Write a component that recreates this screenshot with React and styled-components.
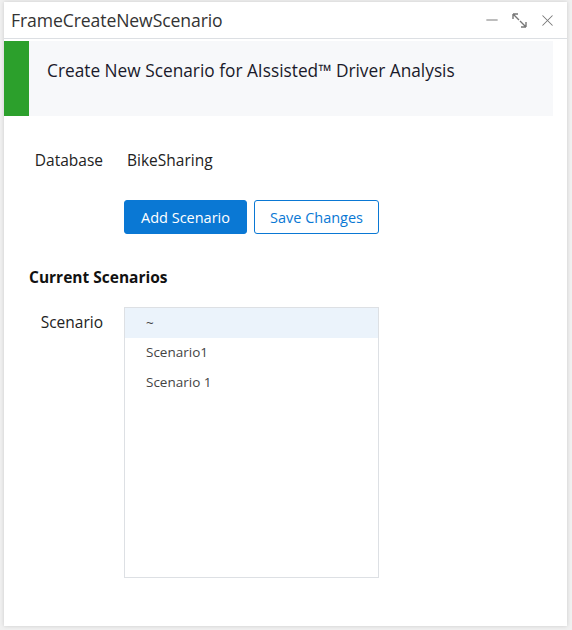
import React from "react";
import styled, { createGlobalStyle } from "styled-components";
import { Minus, X } from "lucide-react";

const Global = createGlobalStyle`
  html, body { margin: 0; padding: 0; background: #f0f0f0; }
  body { font-family: "Open Sans", "Noto Sans", sans-serif; color: #222; }
`;

const Page = styled.div`
  width: 572px;
  height: 630px;
  padding: 2px 5px 4px 4px;
  box-sizing: border-box;
`;

const Window = styled.div`
  height: 100%;
  background: #fff;
  box-shadow: 0 0 4px rgba(0, 0, 0, 0.15);
  display: flex;
  flex-direction: column;
`;

const TitleBar = styled.div`
  height: 36px;
  display: flex;
  align-items: center;
  justify-content: space-between;
  padding: 0 10px 0 7px;
  border-bottom: 1px solid #dcdfe3;
`;

const Title = styled.div`
  font-size: 17.6px;
  color: #333;
  letter-spacing: -0.1px;
`;

const Controls = styled.div`
  display: flex;
  align-items: center;
  gap: 10px;
  color: #777;
`;

const Banner = styled.div`
  margin: 2px 14px 0 0;
  height: 75px;
  display: flex;
  background: #f7f8fa;
`;

const Stripe = styled.div`
  width: 25px;
  background: #2ca02c;
`;

const BannerText = styled.div`
  display: flex;
  align-items: center;
  padding-left: 18px;
  padding-bottom: 16px;
  font-size: 17.3px;
  color: #1a1a2a;
`;

const Body = styled.div`
  padding: 0 0 0 25px;
`;

const Row = styled.div`
  display: grid;
  grid-template-columns: 95px auto;
  align-items: ${p => (p.top ? "start" : "center")};
  margin-top: ${p => p.mt}px;
`;

const Label = styled.div`
  font-size: 15.5px;
  color: #222;
  text-align: right;
  padding-right: 21px;
  margin-top: ${p => p.mt || 0}px;
`;

const Value = styled.div`
  font-size: 15.5px;
  color: #222;
  padding-left: 3px;
`;

const Buttons = styled.div`
  display: flex;
  gap: 7px;
`;

const Button = styled.button`
  height: 34px;
  padding: 0;
  border-radius: 3px;
  font-family: inherit;
  font-size: 14.5px;
  white-space: nowrap;
  border: 1px solid #0a78d4;
  background: ${p => (p.primary ? "#0a78d4" : "#fff")};
  color: ${p => (p.primary ? "#fff" : "#0a78d4")};
  width: ${p => p.w}px;
`;

const Heading = styled.div`
  margin: 32px 0 0 0;
  font-size: 15.5px;
  font-weight: 700;
  color: #111;
`;

const ListBox = styled.div`
  width: 253px;
  height: 269px;
  border: 1px solid #dde0e4;
`;

const Item = styled.div`
  height: 29.5px;
  display: flex;
  align-items: center;
  padding-left: 21px;
  font-size: 13.5px;
  color: #444;
  background: ${p => (p.selected ? "#ebf3fb" : "transparent")};
`;

const Expand = () => (
  <svg width="17" height="17" viewBox="0 0 17 17" fill="none" stroke="#777" strokeWidth="1.4">
    <path d="M2 2 L8 8 M2 2 L2 7 M2 2 L7 2" />
    <path d="M15 15 L9 9 M15 15 L15 10 M15 15 L10 15" />
  </svg>
);

const items = ["~", "Scenario1", "Scenario 1"];

export default function App() {
  return (
    <Page>
      <Global />
      <Window>
        <TitleBar>
          <Title>FrameCreateNewScenario</Title>
          <Controls>
            <Minus size={18} strokeWidth={1.3} />
            <Expand />
            <X size={19} strokeWidth={1.3} />
          </Controls>
        </TitleBar>
        <Banner>
          <Stripe />
          <BannerText>Create New Scenario for AIssisted™ Driver Analysis</BannerText>
        </Banner>
        <Body>
          <Row mt={33}>
            <Label>Database</Label>
            <Value>BikeSharing</Value>
          </Row>
          <Row mt={29}>
            <div />
            <Buttons>
              <Button primary w={123}>Add Scenario</Button>
              <Button w={125}>Save Changes</Button>
            </Buttons>
          </Row>
          <Heading>Current Scenarios</Heading>
          <Row mt={19} top>
            <Label mt={4}>Scenario</Label>
            <ListBox>
              {items.map((it, i) => (
                <Item key={i} selected={i === 0}>{it}</Item>
              ))}
            </ListBox>
          </Row>
        </Body>
      </Window>
    </Page>
  );
}
